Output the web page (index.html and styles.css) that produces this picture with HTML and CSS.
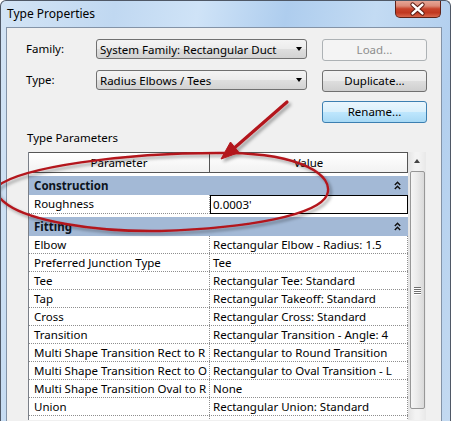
FILE: index.html
```html
<!DOCTYPE html>
<html>
<head>
<meta charset="utf-8">
<link rel="stylesheet" href="styles.css">
</head>
<body>
<div class="window">
  <div class="titlebar">
    <span class="title">Type Properties</span>
    <div class="close">
      <svg width="46" height="18" viewBox="0 0 46 18">
        <path d="M18 4.5 L28 13.5 M28 4.5 L18 13.5" stroke="#5a1a12" stroke-width="4.6" stroke-linecap="round"/>
        <path d="M18 4.5 L28 13.5 M28 4.5 L18 13.5" stroke="#ffffff" stroke-width="2.6" stroke-linecap="round"/>
      </svg>
    </div>
  </div>
  <div class="client">
    <div class="form">
      <div class="lbl">Family:</div>
      <div class="combo"><span class="combo-text">System Family: Rectangular Duct</span><i class="caret"></i></div>
      <div class="btn disabled">Load...</div>
      <div class="lbl">Type:</div>
      <div class="combo"><span class="combo-text">Radius Elbows / Tees</span><i class="caret"></i></div>
      <div class="btn">Duplicate...</div>
      <div class="btn hot rename">Rename...</div>
    </div>
    <div class="section-label">Type Parameters</div>
    <div class="grid-wrap">
      <div class="grid">
        <div class="head"><div class="hcell">Parameter</div><div class="hcell">Value</div></div>
        <div class="group"><span>Construction</span>
          <svg class="chev" width="7" height="9" viewBox="0 0 7 9"><path d="M0.8 4 L3.5 1.3 L6.2 4 M0.8 8 L3.5 5.3 L6.2 8" fill="none" stroke="#111" stroke-width="1.4"/></svg>
        </div>
        <div class="row editrow"><div class="p">Roughness</div><div class="v edit">0.0003'</div></div>
        <div class="group"><span>Fitting</span>
          <svg class="chev" width="7" height="9" viewBox="0 0 7 9"><path d="M0.8 4 L3.5 1.3 L6.2 4 M0.8 8 L3.5 5.3 L6.2 8" fill="none" stroke="#111" stroke-width="1.4"/></svg>
        </div>
        <div class="row"><div class="p">Elbow</div><div class="v">Rectangular Elbow - Radius: 1.5</div></div>
        <div class="row"><div class="p">Preferred Junction Type</div><div class="v">Tee</div></div>
        <div class="row"><div class="p">Tee</div><div class="v">Rectangular Tee: Standard</div></div>
        <div class="row"><div class="p">Tap</div><div class="v">Rectangular Takeoff: Standard</div></div>
        <div class="row"><div class="p">Cross</div><div class="v">Rectangular Cross: Standard</div></div>
        <div class="row"><div class="p">Transition</div><div class="v">Rectangular Transition - Angle: 4</div></div>
        <div class="row"><div class="p">Multi Shape Transition Rect to R</div><div class="v">Rectangular to Round Transition</div></div>
        <div class="row"><div class="p">Multi Shape Transition Rect to O</div><div class="v">Rectangular to Oval Transition - L</div></div>
        <div class="row"><div class="p">Multi Shape Transition Oval to R</div><div class="v">None</div></div>
        <div class="row"><div class="p">Union</div><div class="v">Rectangular Union: Standard</div></div>
        <div class="row"><div class="p"></div><div class="v"></div></div>
      </div>
      <div class="scrollbar">
        <div class="sb-up"><i class="up-tri"></i></div>
        <div class="thumb"><div class="grip"><i></i><i></i><i></i><i></i></div></div>
      </div>
    </div>
  </div>
  <svg class="annot" width="451" height="421" viewBox="0 0 451 421">
    <defs>
      <filter id="sh" x="-10%" y="-20%" width="130%" height="150%">
        <feDropShadow dx="2.5" dy="2.5" stdDeviation="1.6" flood-color="#000" flood-opacity="0.35"/>
      </filter>
    </defs>
    <g filter="url(#sh)">
      <path d="M-2 186 C 20 168, 120 152, 230 153 C 300 154, 335 175, 327 195 C 318 215, 250 228, 160 231 C 90 232, 30 220, 8 205 C -2 198, -6 192, -2 186 Z" fill="none" stroke="#b3151c" stroke-width="2.4"/>
      <path d="M287 102 L232 150" stroke="#b3151c" stroke-width="3.2" stroke-linecap="round"/>
      <path d="M221 159 L239 152.5 L230.5 142 Z" fill="#b3151c" stroke="#b3151c" stroke-width="1" stroke-linejoin="round"/>
    </g>
  </svg>
</div>
</body>
</html>
```

FILE: styles.css
```css
html, body {
  margin: 0;
  padding: 0;
  background: #ffffff;
}

body {
  font-family: "Noto Sans", "Open Sans", sans-serif;
  font-size: 11.5px;
  color: #000;
}

.window {
  position: relative;
  width: 451px;
  height: 421px;
  box-sizing: border-box;
  overflow: hidden;
  border: 1px solid #4f5866;
  border-bottom: none;
  border-radius: 6px 6px 0 0;
  background: linear-gradient(100deg, #d3e4f5 0%, #c0d8f1 22%, #cfe3f7 38%, #aecdee 55%, #c3dbf3 72%, #b2cfee 88%, #c4daf1 100%);
}

.titlebar {
  height: 26px;
  display: flex;
  justify-content: space-between;
  align-items: flex-start;
}

.title {
  padding-left: 6px;
  line-height: 25px;
  font-size: 12px;
}

.close {
  width: 46px;
  height: 18px;
  margin-top: -1px;
  margin-right: 9px;
  box-sizing: border-box;
  border: 1px solid #5e2218;
  border-top: none;
  border-radius: 0 0 5px 5px;
  background: linear-gradient(#e9ab9c 0%, #dc8a77 35%, #c8432b 52%, #c03820 75%, #d9674d 100%);
  display: flex;
  align-items: center;
  justify-content: center;
}

.close svg {
  display: block;
  margin-left: -1px;
}

.client {
  margin-left: 5px;
  width: 436px;
  height: 394px;
  box-sizing: border-box;
  border: 1px solid #8393a7;
  border-bottom: none;
  background: #f0f0f0;
}

.form {
  display: grid;
  grid-template-columns: 70px 226px 105px;
  grid-auto-rows: 22px;
  row-gap: 9px;
  padding: 11px 0 0 19px;
}

.lbl {
  line-height: 17px;
  padding-top: 1px;
}

.combo {
  width: 211px;
  height: 20px;
  box-sizing: border-box;
  border: 1px solid #707070;
  border-radius: 3px;
  background: linear-gradient(#f4f4f4 0%, #ececec 48%, #dedede 52%, #d2d2d2 100%);
  display: flex;
  align-items: center;
  padding: 0 3px 0 3px;
}

.combo-text {
  flex: 1;
  line-height: 17px;
  white-space: nowrap;
}

.caret {
  width: 0;
  height: 0;
  border-left: 3.5px solid transparent;
  border-right: 3.5px solid transparent;
  border-top: 4px solid #000;
  margin-right: 1px;
}

.btn {
  height: 22px;
  box-sizing: border-box;
  border: 1px solid #707070;
  border-radius: 3px;
  background: linear-gradient(#f2f2f2 0%, #ebebeb 48%, #dddddd 52%, #cfcfcf 100%);
  text-align: center;
  line-height: 19px;
}

.btn.disabled {
  border-color: #adb2b5;
  background: #f4f4f4;
  color: #8d8d8d;
}

.btn.hot {
  border-color: #3c7fb1;
  background: linear-gradient(#eaf6fd 0%, #d9f0fc 48%, #bee6fd 52%, #a7d9f5 100%);
}

.rename {
  grid-column: 3;
}

.section-label {
  margin-top: 7px;
  padding-left: 20px;
  line-height: 16px;
}

.grid-wrap {
  display: flex;
  margin-top: 6px;
  margin-left: 21px;
  width: 398px;
  height: 268px;
  overflow: hidden;
}

.grid {
  width: 380px;
  box-sizing: border-box;
  border-left: 1px solid #7a7f88;
  background: #ffffff;
}

.head {
  display: grid;
  grid-template-columns: 181px 198px;
  height: 21px;
  box-sizing: border-box;
  border-top: 1px solid #555;
  border-bottom: 1px solid #555;
  background: linear-gradient(#ffffff, #f2f2f2);
}

.hcell {
  text-align: center;
  line-height: 19px;
  border-right: 1px solid #555;
}

.group {
  margin-top: 3px;
  height: 19px;
  background: #a3b9d6;
  display: flex;
  align-items: center;
  justify-content: space-between;
  padding: 0 7px 0 5px;
  font-weight: bold;
  color: #0c1420;
}

.chev {
  display: block;
}

.row {
  display: grid;
  grid-template-columns: 181px 198px;
  height: 18px;
  box-sizing: border-box;
  border-bottom: 1px dotted #8e8e8e;
}

.p {
  padding-left: 5px;
  line-height: 17px;
  border-right: 1px dotted #8e8e8e;
  white-space: nowrap;
  overflow: hidden;
}

.v {
  padding-left: 3px;
  line-height: 17px;
  border-right: 1px dotted #8e8e8e;
  white-space: nowrap;
  overflow: hidden;
}

.editrow {
  height: 19px;
  border-bottom: none;
}

.editrow .p {
  border-bottom: 1px dotted #8e8e8e;
}

.v.edit {
  border: 1px solid #000;
  padding-left: 2px;
  line-height: 17px;
}

.scrollbar {
  width: 18px;
  background: linear-gradient(to right, #e4e4e4, #f3f3f3 40%, #f3f3f3 60%, #e8e8e8);
  display: flex;
  flex-direction: column;
  align-items: center;
}

.sb-up {
  height: 17px;
  width: 18px;
  display: flex;
  align-items: center;
  justify-content: center;
}

.up-tri {
  width: 0;
  height: 0;
  border-left: 3.5px solid transparent;
  border-right: 3.5px solid transparent;
  border-bottom: 4px solid #444;
}

.thumb {
  margin-top: 2px;
  width: 15px;
  height: 238px;
  box-sizing: border-box;
  border: 1px solid #979797;
  border-radius: 2px;
  background: linear-gradient(to right, #f5f5f5, #ebebeb 45%, #d9d9d9 100%);
  display: flex;
  align-items: center;
  justify-content: center;
}

.grip {
  display: flex;
  flex-direction: column;
  gap: 1px;
}

.grip i {
  display: block;
  width: 7px;
  height: 1px;
  background: #6e6e6e;
  box-shadow: 0 1px 0 #ffffff;
}

.annot {
  position: absolute;
  left: -1px;
  top: -1px;
  pointer-events: none;
}
```
